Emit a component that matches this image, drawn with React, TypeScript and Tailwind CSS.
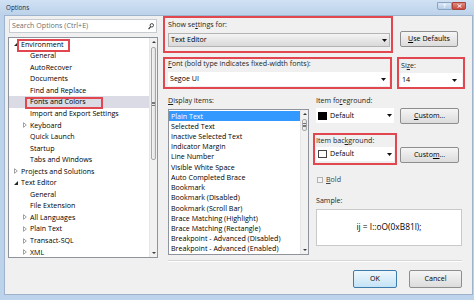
import React from "react";

type TreeRow = { t: string; l: 0 | 1; a?: "o" | "c"; sel?: boolean; box?: string };

const tree: TreeRow[] = [
  { t: "Environment", l: 0, a: "o", box: "left-[8px] top-[0px] w-[53px] h-[13px]" },
  { t: "General", l: 1 },
  { t: "AutoRecover", l: 1 },
  { t: "Documents", l: 1 },
  { t: "Find and Replace", l: 1 },
  { t: "Fonts and Colors", l: 1, sel: true, box: "left-[16px] top-[1px] w-[78px] h-[12px]" },
  { t: "Import and Export Settings", l: 1 },
  { t: "Keyboard", l: 1, a: "c" },
  { t: "Quick Launch", l: 1 },
  { t: "Startup", l: 1 },
  { t: "Tabs and Windows", l: 1 },
  { t: "Projects and Solutions", l: 0, a: "c" },
  { t: "Text Editor", l: 0, a: "o" },
  { t: "General", l: 1 },
  { t: "File Extension", l: 1 },
  { t: "All Languages", l: 1, a: "c" },
  { t: "Plain Text", l: 1, a: "c" },
  { t: "Transact-SQL", l: 1, a: "c" },
  { t: "XML", l: 1, a: "c" },
];

const items = [
  "Plain Text",
  "Selected Text",
  "Inactive Selected Text",
  "Indicator Margin",
  "Line Number",
  "Visible White Space",
  "Auto Completed Brace",
  "Bookmark",
  "Bookmark (Disabled)",
  "Bookmark (Scroll Bar)",
  "Brace Matching (Highlight)",
  "Brace Matching (Rectangle)",
  "Breakpoint - Advanced (Disabled)",
  "Breakpoint - Advanced (Enabled)",
];

function U({ children }: { children: React.ReactNode }) {
  return <span className="underline decoration-[0.7px] underline-offset-[1px]">{children}</span>;
}

function DownArrow() {
  return (
    <svg width="5" height="3" viewBox="0 0 5 3" className="shrink-0">
      <path d="M0 0H5L2.5 3Z" fill="#111" />
    </svg>
  );
}

function Combo({
  className,
  children,
  gray,
  pr,
}: {
  className: string;
  children: React.ReactNode;
  gray?: boolean;
  pr: string;
}) {
  return (
    <div
      className={`flex items-center ${
        gray
          ? "bg-gradient-to-b from-[#f4f4f4] to-[#d9d9d9] border border-[#b4b4b4]"
          : "bg-white"
      } ${pr} ${className}`}
    >
      <div className="flex-1 flex items-center pl-[2px] gap-[3px]">{children}</div>
      <DownArrow />
    </div>
  );
}

function Btn({
  className,
  children,
  primary,
}: {
  className: string;
  children: React.ReactNode;
  primary?: boolean;
}) {
  return (
    <div
      className={`flex items-center justify-center rounded-[2px] border ${
        primary
          ? "border-[#3d7bad] bg-gradient-to-b from-[#eef7fd] to-[#c4e3f7]"
          : "border-[#8e8e8e] bg-gradient-to-b from-[#f5f5f5] to-[#dcdcdc]"
      } ${className}`}
    >
      {children}
    </div>
  );
}

function Scroll({ thumb }: { thumb: string }) {
  return (
    <div className="w-[8px] shrink-0 flex flex-col bg-[#f1f1f1] border-l border-[#e6e6e6]">
      <div className="h-[8px] flex items-center justify-center">
        <svg width="4" height="2" viewBox="0 0 4 2">
          <path d="M0 2H4L2 0Z" fill="#3a3a3a" />
        </svg>
      </div>
      <div className="flex-1 flex flex-col">
        <div
          className={`mx-[1px] rounded-[2px] border border-[#a8a8a8] bg-gradient-to-r from-[#f4f4f4] to-[#e0e0e0] flex flex-col items-center justify-center gap-[1px] ${thumb}`}
        >
          <div className="w-[3px] h-[0.5px] bg-[#777]" />
          <div className="w-[3px] h-[0.5px] bg-[#777]" />
          <div className="w-[3px] h-[0.5px] bg-[#777]" />
        </div>
      </div>
      <div className="h-[8px] flex items-center justify-center">
        <svg width="4" height="2" viewBox="0 0 4 2">
          <path d="M0 0H4L2 2Z" fill="#3a3a3a" />
        </svg>
      </div>
    </div>
  );
}

function TreeArrow({ a }: { a?: "o" | "c" }) {
  if (a === "o")
    return (
      <svg width="4" height="4" viewBox="0 0 4 4" className="ml-[1px]">
        <path d="M4 0V4H0Z" fill="#262626" />
      </svg>
    );
  if (a === "c")
    return (
      <svg width="4" height="6" viewBox="0 0 4 6" className="ml-[1px]">
        <path d="M0.5 0.7L3.3 3L0.5 5.3Z" fill="#fff" stroke="#8a8a8a" strokeWidth="0.8" />
      </svg>
    );
  return null;
}

const RED = "border-2 border-[#e2474f]";

export default function App() {
  return (
    <div className="w-[474px] h-[300px] bg-[#bdd3eb] font-['Open_Sans',sans-serif] text-[7.1px] leading-none text-black flex flex-col overflow-hidden">
      {/* title bar */}
      <div className="h-[15px] shrink-0 flex items-start bg-gradient-to-b from-[#d0e1f3] to-[#bcd2ea]">
        <span className="ml-[6px] mt-[5px] text-[6.3px] text-[#1b2a3c]">Options</span>
        <div className="ml-auto mr-[8px] mt-[2px] flex">
          <div className="w-[15px] h-[8px] rounded-bl-[2px] border border-[#8aa3c2] bg-gradient-to-b from-[#dbe8f6] to-[#b3cbe7] flex items-center justify-center text-[5px] text-white font-bold">
            ?
          </div>
          <div className="w-[14px] h-[8px] rounded-br-[2px] border border-[#a8433c] bg-gradient-to-b from-[#e08a80] to-[#c8483e] flex items-center justify-center">
            <svg width="5" height="4" viewBox="0 0 5 4">
              <path d="M0.5 0.3L4.5 3.7M4.5 0.3L0.5 3.7" stroke="#fff" strokeWidth="1" />
            </svg>
          </div>
        </div>
      </div>

      {/* client */}
      <div className="flex-1 ml-[4px] mr-[1px] mb-[5px] bg-[#f0f0f0] border border-[#9fb3cc] flex flex-col">
        <div className="h-[243px] shrink-0 flex">
          {/* left column */}
          <div className="w-[153px] shrink-0 pl-[3px] flex flex-col">
            <div className="mt-[3px] mx-[1px] h-[14px] bg-white border border-[#c7cbd2] flex items-center pl-[2px] pr-[2px] text-[#6f6f6f]">
              <span>Search Options (Ctrl+E)</span>
              <svg width="6" height="7" viewBox="0 0 6 7" className="ml-auto">
                <circle cx="3.8" cy="2.3" r="1.7" fill="none" stroke="#333" strokeWidth="0.9" />
                <path d="M2.6 3.6L0.6 6.2" stroke="#333" strokeWidth="1.1" />
              </svg>
            </div>
            <div className="mt-[4px] h-[221px] bg-white border border-[#8f939b] flex">
              <div className="flex-1 flex flex-col pt-[0.5px]">
                {tree.map((r, i) => (
                  <div
                    key={i}
                    className={`relative h-[11.55px] shrink-0 flex items-center ${
                      r.l === 0 ? "pl-[4px]" : "pl-[13px]"
                    } ${r.sel ? "bg-[#dadbe4]" : ""}`}
                  >
                    <div className="w-[8px] h-full flex items-center">
                      <TreeArrow a={r.a} />
                    </div>
                    <span className="whitespace-nowrap">{r.t}</span>
                    {r.box && <div className={`absolute ${RED} ${r.box}`} />}
                  </div>
                ))}
              </div>
              <Scroll thumb="mt-[1px] h-[113px]" />
            </div>
          </div>

          {/* right column */}
          <div className="ml-[5px] w-[303px] flex flex-col">
            {/* row A */}
            <div className="flex h-[37px] shrink-0">
              <div className={`w-[230px] h-[37px] ${RED} flex flex-col pl-[3px]`}>
                <div className="mt-[1px] h-[12px] flex items-center text-[#1e1e1e]">
                  <span>
                    Show se<U>t</U>tings for:
                  </span>
                </div>
                <Combo gray className="mt-[2px] h-[14px] w-[222px]" pr="pr-[2px]">
                  <span>Text Editor</span>
                </Combo>
              </div>
              <Btn className="ml-[7px] mt-[15px] w-[58px] h-[16px]">
                <span>
                  <U>U</U>se Defaults
                </span>
              </Btn>
            </div>

            {/* row B */}
            <div className="mt-[4px] flex h-[32px] shrink-0">
              <div className={`w-[229px] h-[32px] ${RED} flex flex-col pl-[3px]`}>
                <div className="h-[10px] flex items-center text-[#1e1e1e]">
                  <span>
                    <U>F</U>ont (bold type indicates fixed-width fonts):
                  </span>
                </div>
                <Combo className="mt-[3px] h-[14px] w-[221px]" pr="pr-[3px]">
                  <span>Segoe UI</span>
                </Combo>
              </div>
              <div className={`ml-[5px] w-[68px] h-[32px] ${RED} flex flex-col`}>
                <div className="mt-[2px] pl-[2px] h-[10px] flex items-center text-[#1e1e1e]">
                  <span>
                    Si<U>z</U>e:
                  </span>
                </div>
                <Combo className="mt-[2px] ml-[1px] h-[14px] w-[62px]" pr="pr-[5px]">
                  <span>14</span>
                </Combo>
              </div>
            </div>

            {/* row C */}
            <div className="mt-[7px] flex">
              <div className="ml-[5px] w-[141px] flex flex-col">
                <div className="h-[10px] flex items-center text-[#1e1e1e]">
                  <span>
                    <U>D</U>isplay items:
                  </span>
                </div>
                <div className="mt-[3px] h-[146px] bg-white border border-[#8f939b] flex">
                  <div className="flex-1 flex flex-col pt-[1px]">
                    {items.map((t, i) => (
                      <div
                        key={i}
                        className={`h-[10.23px] shrink-0 flex items-center pl-[2px] whitespace-nowrap ${
                          i === 0 ? "bg-[#3399ff] text-white" : ""
                        }`}
                      >
                        {t}
                      </div>
                    ))}
                  </div>
                  <Scroll thumb="mt-[1px] h-[12px]" />
                </div>
              </div>

              <div className="ml-[4px] w-[153px] flex flex-col">
                <div className="pl-[3px] h-[10px] flex items-center text-[#1e1e1e]">
                  <span>
                    Item fo<U>r</U>eground:
                  </span>
                </div>
                <div className="mt-[2px] flex">
                  <Combo className="ml-[3px] h-[15px] w-[78px]" pr="pr-[2px]">
                    <div className="w-[9px] h-[8px] bg-black" />
                    <span>Default</span>
                  </Combo>
                  <Btn className="ml-[6px] w-[59px] h-[16px]">
                    <span>
                      <U>C</U>ustom...
                    </span>
                  </Btn>
                </div>
                <div className="mt-[9px] flex">
                  <div className={`w-[84px] h-[32px] ${RED} flex flex-col`}>
                    <div className="mt-[1px] pl-[1px] h-[10px] flex items-center text-[#1e1e1e]">
                      <span>
                        Item bac<U>k</U>ground:
                      </span>
                    </div>
                    <Combo className="mt-[1px] ml-[1px] h-[14px] w-[78px]" pr="pr-[2px]">
                      <div className="w-[9px] h-[8px] bg-white border border-[#444]" />
                      <span>Default</span>
                    </Combo>
                  </div>
                  <Btn className="ml-[3px] mt-[14px] w-[59px] h-[16px]">
                    <span>
                      Custo<U>m</U>...
                    </span>
                  </Btn>
                </div>
                <div className="mt-[12px] ml-[4px] h-[6px] flex items-center">
                  <div className="w-[6px] h-[6px] border border-[#b2b2b2] bg-[#f4f4f4]" />
                  <span className="ml-[3px] text-[#444]">
                    <U>B</U>old
                  </span>
                </div>
                <div className="mt-[13px] pl-[3px] h-[10px] flex items-center text-[#1e1e1e]">
                  <span>Sample:</span>
                </div>
                <div className="mt-[3px] ml-[3px] w-[146px] h-[37px] bg-white border border-[#c9c9c9] flex items-center justify-center text-[8.4px]">
                  <span>ij = I::oO(0xB81l);</span>
                </div>
              </div>
            </div>
          </div>
        </div>

        {/* separator */}
        <div className="mt-[1px] ml-[163px] w-[294px] h-[1px] bg-[#d6d6d6]" />
        <div className="ml-[163px] w-[294px] h-[1px] bg-white" />

        {/* buttons */}
        <div className="mt-[8px] h-[18px] flex justify-end pr-[10px]">
          <Btn primary className="w-[44px] h-[18px]">
            <span>OK</span>
          </Btn>
          <Btn className="ml-[12px] w-[53px] h-[18px]">
            <span>Cancel</span>
          </Btn>
        </div>
      </div>
    </div>
  );
}
